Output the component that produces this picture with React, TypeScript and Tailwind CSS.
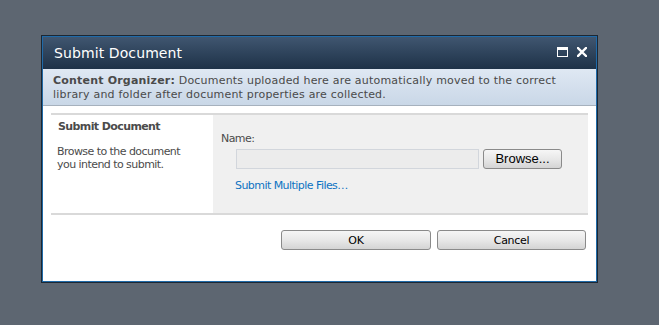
const ui = { fontFamily: '"DejaVu Sans", Verdana, sans-serif' };

function MaximizeIcon() {
  return (
    <svg width="11" height="10" viewBox="0 0 11 10" className="block">
      <rect x="0.5" y="0.5" width="10" height="9" fill="none" stroke="#ffffff" />
      <rect x="1" y="1" width="9" height="2" fill="#ffffff" />
    </svg>
  );
}

function CloseIcon() {
  return (
    <svg width="10" height="10" viewBox="0 0 10 10" className="block">
      <path d="M1 1 L9 9 M9 1 L1 9" stroke="#ffffff" strokeWidth="2.4" strokeLinecap="square" />
    </svg>
  );
}

function Button({ label, className }: { label: string; className: string }) {
  return (
    <button
      className={`h-[20px] rounded-[3px] border border-[#8a8a8a] bg-gradient-to-b from-[#f6f6f6] via-[#e8e8e8] to-[#d4d4d4] text-black leading-none ${className}`}
    >
      {label}
    </button>
  );
}

export default function App() {
  return (
    <div className="w-[659px] h-[325px] bg-[#5d6671] pt-[35px] pl-[41px]" style={ui}>
      <div className="w-[557px] h-[248px] border border-[#1c2733] bg-white">
        <div className="h-full border border-[#1f6aa8] flex flex-col">
          <div className="h-[32px] flex items-center pl-[11px] pr-[9px] bg-gradient-to-b from-[#405670] to-[#1e3248]">
            <div className="flex-1 text-white text-[14px] tracking-[0.1px]">Submit Document</div>
            <div className="flex items-center gap-[9px] pb-[3px]">
              <MaximizeIcon />
              <CloseIcon />
            </div>
          </div>
          <div className="h-[37px] border-b border-[#a6b1bd] bg-gradient-to-b from-[#dfe8f3] to-[#c9d7e7] pl-[10px] pt-[5px] text-[11px] leading-[14px] tracking-[0.2px] text-[#4a4a4a]">
            <span className="font-bold">Content Organizer:</span> Documents uploaded here are automatically moved to the correct
            <br />
            library and folder after document properties are collected.
          </div>
          <div className="px-[8px] pt-[7px]">
            <div className="flex h-[102px] border-t border-b border-[#d9d9d9] border-t-[2px] border-b-[2px] text-[11px] tracking-[-0.55px] text-[#4b4b4b]">
              <div className="w-[162px] pl-[6px] pt-[4px]">
                <div className="font-bold pl-[1px] tracking-[-0.6px]">Submit Document</div>
                <div className="mt-[9px] leading-[13px]">
                  Browse to the document
                  <br />
                  you intend to submit.
                </div>
              </div>
              <div className="flex-1 bg-[#f0f0f0] pl-[8px] pt-[16px]">
                <div>Name:</div>
                <div className="flex items-center mt-[1px] pl-[15px]">
                  <div className="w-[243px] h-[20px] border border-[#d2d6dc] bg-[#ececec]" />
                  <Button
                    label="Browse..."
                    className="ml-[4px] w-[79px] h-[19px] text-[13px] tracking-normal font-['Liberation_Sans',Arial,sans-serif]"
                  />
                </div>
                <div className="mt-[9px] pl-[14px] text-[#0d72c2]">Submit Multiple Files…</div>
              </div>
            </div>
          </div>
          <div className="flex justify-end gap-[6px] pr-[10px] pt-[15px]">
            <Button label="OK" className="w-[150px] text-[11px] tracking-[-0.3px]" />
            <Button label="Cancel" className="w-[149px] text-[11px] tracking-[-0.3px]" />
          </div>
        </div>
      </div>
    </div>
  );
}
